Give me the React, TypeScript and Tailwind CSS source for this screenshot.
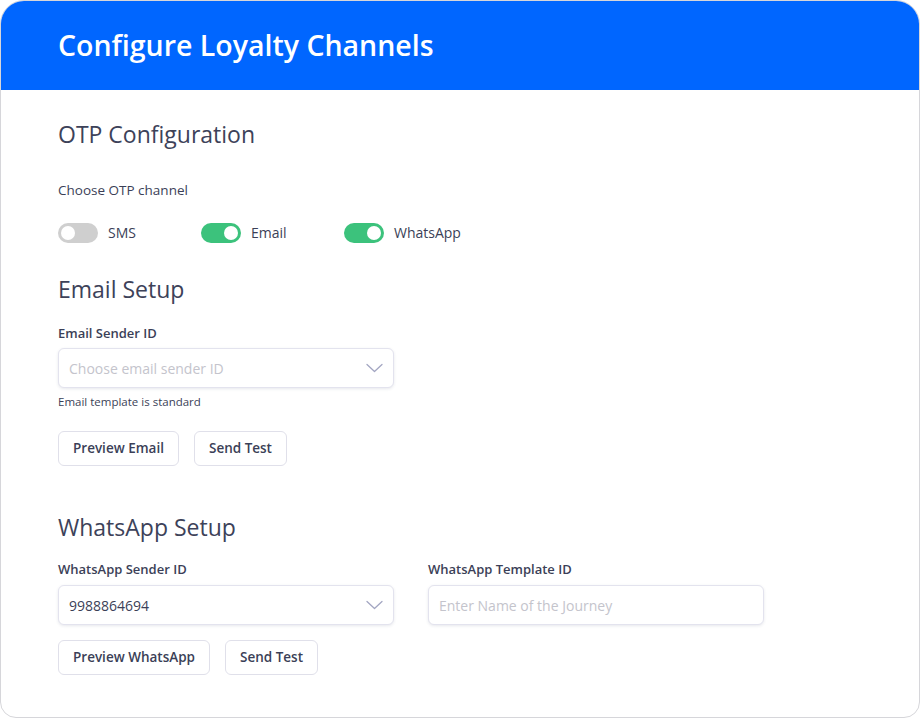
function Toggle({ on, label }: { on: boolean; label: string }) {
  return (
    <div className="flex w-[143px] items-center gap-[10px]">
      <div
        className={`flex h-[20px] w-[40px] items-center rounded-full px-[3px] ${
          on ? 'justify-end bg-[#3cc27c]' : 'justify-start bg-[#cfcfcf]'
        }`}
      >
        <div className="h-[14px] w-[14px] rounded-full bg-white" />
      </div>
      <span className="text-[14px] text-[#3b3f57]">{label}</span>
    </div>
  )
}

function Chevron() {
  return (
    <svg width="17" height="10" viewBox="0 0 17 10" fill="none">
      <path d="M1 1.5 L8.5 8.5 L16 1.5" stroke="#a3a6c2" strokeWidth="1.3" strokeLinecap="round" strokeLinejoin="round" />
    </svg>
  )
}

function SelectBox({ value, placeholder }: { value?: string; placeholder?: string }) {
  return (
    <div className="flex h-[40px] w-[336px] items-center justify-between rounded-[6px] border border-[#e3e3ee] bg-white pl-[10px] pr-[10px] shadow-[0_1px_3px_rgba(60,64,110,0.12)]">
      <span className={`text-[14px] ${value ? 'text-[#3b3f57]' : 'text-[#c4c4cc]'}`}>{value ?? placeholder}</span>
      <Chevron />
    </div>
  )
}

function Button({ children }: { children: string }) {
  return (
    <button className="h-[35px] rounded-[6px] border border-[#e0e0ea] bg-white px-[14px] text-[13.5px] font-semibold text-[#3b3f57]">
      {children}
    </button>
  )
}

function App() {
  return (
    <main className="h-[720px] w-[920px] bg-white" style={{ fontFamily: '"Open Sans", "Noto Sans", sans-serif' }}>
      <div className="flex h-[718px] w-[920px] flex-col overflow-hidden rounded-t-[24px] rounded-b-[16px] border border-[#d6d6da]">
        <header className="flex h-[89px] shrink-0 items-center bg-[#0066ff] px-[57px]">
          <h1 className="text-[28.5px] font-semibold text-white">Configure Loyalty Channels</h1>
        </header>
        <section className="flex flex-col px-[57px] pt-[28px] text-[#3b3f57]">
          <h2 className="text-[23px] font-medium leading-[32px] text-[#3d4259]">OTP Configuration</h2>
          <p className="mt-[30px] text-[13.5px] font-medium leading-[20px]">Choose OTP channel</p>
          <div className="mt-[22px] flex">
            <Toggle on={false} label="SMS" />
            <Toggle on label="Email" />
            <Toggle on label="WhatsApp" />
          </div>

          <h2 className="mt-[30px] text-[23px] font-medium leading-[32px] text-[#3d4259]">Email Setup</h2>
          <p className="mt-[18px] text-[13px] font-semibold leading-[20px]">Email Sender ID</p>
          <div className="mt-[5px]">
            <SelectBox placeholder="Choose email sender ID" />
          </div>
          <p className="mt-[6px] text-[11.5px] leading-[16px]">Email template is standard</p>
          <div className="mt-[21px] flex gap-[15px]">
            <Button>Preview Email</Button>
            <Button>Send Test</Button>
          </div>

          <h2 className="mt-[45px] text-[23px] font-medium leading-[32px] text-[#3d4259]">WhatsApp Setup</h2>
          <div className="mt-[16px] flex gap-[34px]">
            <div className="flex flex-col gap-[6px]">
              <p className="text-[13px] font-semibold leading-[20px]">WhatsApp Sender ID</p>
              <SelectBox value="9988864694" />
            </div>
            <div className="flex flex-col gap-[6px]">
              <p className="text-[13px] font-semibold leading-[20px]">WhatsApp Template ID</p>
              <div className="flex h-[40px] w-[336px] items-center rounded-[6px] border border-[#e3e3ee] bg-white px-[10px] shadow-[0_1px_3px_rgba(60,64,110,0.12)]">
                <span className="text-[14px] text-[#c4c4cc]">Enter Name of the Journey</span>
              </div>
            </div>
          </div>
          <div className="mt-[15px] flex gap-[15px]">
            <Button>Preview WhatsApp</Button>
            <Button>Send Test</Button>
          </div>
        </section>
      </div>
    </main>
  )
}

export default App
